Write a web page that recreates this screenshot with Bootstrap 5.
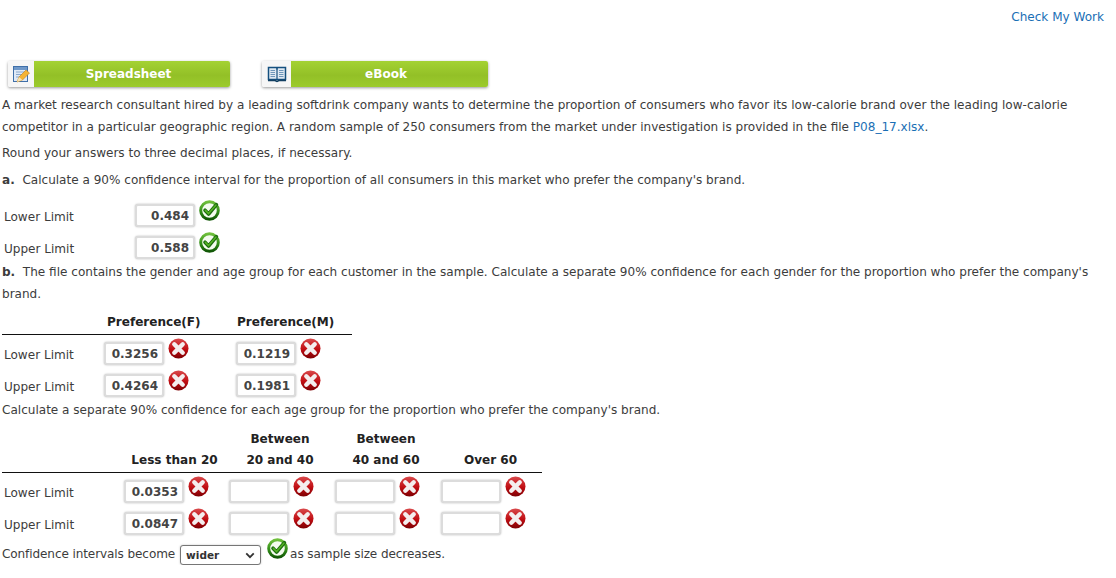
<!DOCTYPE html>
<html lang="en">
<head>
  <meta charset="UTF-8">
  <title>Check My Work</title>
  <link href="https://cdn.jsdelivr.net/npm/bootstrap@5.3.0/dist/css/bootstrap.min.css" rel="stylesheet">
  <style>
    body { font-family: "DejaVu Sans", Verdana, sans-serif; font-size: 12.06px; line-height: 22px; color: #3c3c3c; background: #fff; }
    a { color: #1a6fb5; text-decoration: none; }
    .page-wrap { padding: 6px 12px 0 2px; }
    .top-link { height: 22px; margin-bottom: 33px; }
    .tool-row { margin-left: 6px; margin-bottom: 7px; height: 26px; gap: 32px; }
    .tool-btn { height: 26px; display: flex; border-radius: 2px; box-shadow: 0 1px 3px rgba(0,0,0,.4); overflow: hidden; font-weight: 700; color: #fff; font-size: 12px; }
    .tool-ico { background: #f6f6f6; display: flex; align-items: center; justify-content: center; }
    .tool-lbl { background: linear-gradient(#a4d233, #93c027 55%, #9ccb2c); text-align: center; line-height: 26px; padding-right: 7px; }
    .btn-sheet { width: 222px; }
    .btn-sheet .tool-ico { width: 26px; }
    .btn-sheet .tool-lbl { width: 196px; }
    .btn-book { width: 226px; }
    .btn-book .tool-ico { width: 29px; }
    .btn-book .tool-lbl { width: 197px; }
    p { margin: 0; }
    .gap-4px { margin-bottom: 4px; }
    .gap-5px { margin-bottom: 5px; }
    .gap-9px { margin-bottom: 9px; }
    .gap-7px { margin-bottom: 7px; }
    .gap-8px { margin-bottom: 8px; }
    .ans-table { border-collapse: separate; border-spacing: 0; table-layout: fixed; }
    .ans-table th { font-weight: 700; color: #222; border-bottom: 1px solid #111; padding: 0 0 1px; vertical-align: bottom; line-height: 21px; }
    .ans-table td { padding: 0 0 5px; vertical-align: top; }
    .ans-table tr:last-child td { padding-bottom: 0; }
    .ans-table tbody tr:first-child td { padding-top: 3px; }
    .ans-table .row-lbl { padding-left: 2px; }
    .row-lbl span { display: block; margin: 6px 0 -1px; }
    .ans-cell { display: flex; align-items: flex-start; padding-left: 2px; }
    .ans-box { width: 60px; height: 23px; margin-top: 4px; padding: 0 4px 0 5px; border: 2px solid #dcdcdc; border-radius: 3px; box-shadow: 0 0 2px rgba(0,0,0,.3); font: 700 12px "DejaVu Sans", Verdana, sans-serif; color: #444; text-align: right; background: #fff; }
    .mark-ico { width: 21px; height: 21px; margin-left: 4px; flex: none; }
    .tbl-one { width: 260px; margin-bottom: 2px; }
    .tbl-two { width: 350px; margin-bottom: 2px; }
    .tbl-three { width: 540px; margin-bottom: 4px; }
    .pref-f { padding-left: 5px !important; }
    .pref-m { padding-left: 3px !important; }
    .head-mid { text-align: center; }
    .last-line span { margin-top: 4px; display: block; letter-spacing: -.1px; }
    .pick-box { width: 81px; height: 20px; margin: 6px 0 0 5px; padding: 0 20px 0 5px; font: 700 10.5px "DejaVu Sans", Verdana, sans-serif; color: #333; border: 1px solid #767676; border-radius: 3px; box-shadow: 0 0 2px rgba(0,0,0,.25); background-image: url("data:image/svg+xml,%3csvg xmlns='http://www.w3.org/2000/svg' viewBox='0 0 12 8'%3e%3cpath fill='none' stroke='%23333' stroke-width='2.2' d='M1.500 1.500 6 6l4.500-4.500'/%3e%3c/svg%3e"); background-size: 10px 7px; background-position: right 5px center; line-height: 18px; }
    .last-line .mark-ico { margin: -1px 2px 0 6px; }
  </style>
</head>
<body>
  <svg width="0" height="0" class="position-absolute">
    <defs>
      <linearGradient id="ringYes" x1="0" y1="0" x2="0" y2="1">
        <stop offset="0" stop-color="#6fbf3c"/><stop offset=".55" stop-color="#338f19"/><stop offset="1" stop-color="#115706"/>
      </linearGradient>
      <linearGradient id="gradNo" x1="0" y1="0" x2="0" y2="1">
        <stop offset="0" stop-color="#d94a4c"/><stop offset=".55" stop-color="#c00d12"/><stop offset="1" stop-color="#7d0003"/>
      </linearGradient>
      <symbol id="icoYes" viewBox="0 0 21 21">
        <circle cx="10.500" cy="10.500" r="8.800" fill="#f4fbef" stroke="url(#ringYes)" stroke-width="3"/>
        <path d="M6 10.200 9.600 14 17.400 4.600" fill="none" stroke="#1d6b10" stroke-width="3.600" stroke-linecap="round" stroke-linejoin="round"/>
        <path d="M6.400 10.400 9.600 13.600 17 5" fill="none" stroke="#55b324" stroke-width="1.500" stroke-linecap="round" stroke-linejoin="round"/>
      </symbol>
      <symbol id="icoNo" viewBox="0 0 21 21">
        <circle cx="10.500" cy="10.500" r="10" fill="url(#gradNo)"/>
        <path d="M6.300 6.300 14.700 14.700M14.700 6.300 6.300 14.700" stroke="#f4eeee" stroke-width="4.400" stroke-linecap="round"/>
      </symbol>
    </defs>
  </svg>

  <div class="page-wrap">
    <div class="top-link text-end"><a href="#">Check My Work</a></div>

    <div class="tool-row d-flex">
      <div class="tool-btn btn-sheet">
        <div class="tool-ico">
          <svg width="20" height="20" viewBox="0 0 20 20">
            <rect x="2.500" y="2.500" width="14" height="15" fill="#dfe9f6" stroke="#3f6fa8"/>
            <rect x="3" y="3" width="13" height="3" fill="#6f98c9"/>
            <path d="M5 8h9M5 10.500h6M5 13h4" stroke="#8aa8cc"/>
            <path d="M6 18 8 13 15 6 18.500 9 11.500 16Z" fill="#f5b335" stroke="#c27d14" stroke-width=".6"/>
            <path d="M6 18 8 13 11.500 16Z" fill="#f7e3b5"/>
          </svg>
        </div>
        <div class="tool-lbl">Spreadsheet</div>
      </div>
      <div class="tool-btn btn-book">
        <div class="tool-ico">
          <svg width="20" height="18" viewBox="0 0 20 18">
            <path d="M1.500 2.500H9.500L10 3.500 10.500 2.500H18.500V14.500H1.500Z" fill="#dfe9f2" stroke="#15507f" stroke-width="1.500"/>
            <path d="M10 3.500V14.500" stroke="#15507f" stroke-width="1.200"/>
            <path d="M3.500 5.500h4.500M3.500 7.500h4.500M3.500 9.500h4.500M3.500 11.500h4.500M12 5.500h4.500M12 7.500h4.500M12 9.500h4.500M12 11.500h4.500" stroke="#6f97ba"/>
            <path d="M1 15.500H8L10 16.500 12 15.500H19" fill="none" stroke="#123f62" stroke-width="1.500"/>
          </svg>
        </div>
        <div class="tool-lbl">eBook</div>
      </div>
    </div>

    <p class="gap-4px">A market research consultant hired by a leading softdrink company wants to determine the proportion of consumers who favor its low-calorie brand over the leading low-calorie competitor in a particular geographic region. A random sample of 250 consumers from the market under investigation is provided in the file <a href="#">P08_17.xlsx</a>.</p>
    <p class="gap-5px">Round your answers to three decimal places, if necessary.</p>
    <p class="gap-9px"><b>a.</b>&nbsp; Calculate a 90% confidence interval for the proportion of all consumers in this market who prefer the company's brand.</p>

    <table class="ans-table tbl-one">
      <colgroup><col style="width:131px"><col></colgroup>
      <tbody>
        <tr>
          <td class="row-lbl" style="padding-top:0"><span>Lower Limit</span></td>
          <td style="padding-top:0"><div class="ans-cell"><input class="ans-box" value="0.484"><svg class="mark-ico"><use href="#icoYes"/></svg></div></td>
        </tr>
        <tr>
          <td class="row-lbl"><span>Upper Limit</span></td>
          <td><div class="ans-cell"><input class="ans-box" value="0.588"><svg class="mark-ico"><use href="#icoYes"/></svg></div></td>
        </tr>
      </tbody>
    </table>

    <p class="gap-7px"><b>b.</b>&nbsp; The file contains the gender and age group for each customer in the sample. Calculate a separate 90% confidence for each gender for the proportion who prefer the company's brand.</p>

    <table class="ans-table tbl-two">
      <colgroup><col style="width:100px"><col style="width:132px"><col></colgroup>
      <thead>
        <tr><th></th><th class="pref-f">Preference(F)</th><th class="pref-m">Preference(M)</th></tr>
      </thead>
      <tbody>
        <tr>
          <td class="row-lbl"><span>Lower Limit</span></td>
          <td><div class="ans-cell"><input class="ans-box" value="0.3256"><svg class="mark-ico"><use href="#icoNo"/></svg></div></td>
          <td><div class="ans-cell"><input class="ans-box" value="0.1219"><svg class="mark-ico"><use href="#icoNo"/></svg></div></td>
        </tr>
        <tr>
          <td class="row-lbl"><span>Upper Limit</span></td>
          <td><div class="ans-cell"><input class="ans-box" value="0.4264"><svg class="mark-ico"><use href="#icoNo"/></svg></div></td>
          <td><div class="ans-cell"><input class="ans-box" value="0.1981"><svg class="mark-ico"><use href="#icoNo"/></svg></div></td>
        </tr>
      </tbody>
    </table>

    <p class="gap-8px">Calculate a separate 90% confidence for each age group for the proportion who prefer the company's brand.</p>

    <table class="ans-table tbl-three">
      <colgroup><col style="width:120px"><col style="width:105px"><col style="width:106px"><col style="width:106px"><col></colgroup>
      <thead>
        <tr>
          <th></th>
          <th class="head-mid">Less than 20</th>
          <th class="head-mid">Between<br>20 and 40</th>
          <th class="head-mid">Between<br>40 and 60</th>
          <th class="head-mid">Over 60</th>
        </tr>
      </thead>
      <tbody>
        <tr>
          <td class="row-lbl"><span>Lower Limit</span></td>
          <td><div class="ans-cell"><input class="ans-box" value="0.0353"><svg class="mark-ico"><use href="#icoNo"/></svg></div></td>
          <td><div class="ans-cell"><input class="ans-box"><svg class="mark-ico"><use href="#icoNo"/></svg></div></td>
          <td><div class="ans-cell"><input class="ans-box"><svg class="mark-ico"><use href="#icoNo"/></svg></div></td>
          <td><div class="ans-cell"><input class="ans-box"><svg class="mark-ico"><use href="#icoNo"/></svg></div></td>
        </tr>
        <tr>
          <td class="row-lbl"><span>Upper Limit</span></td>
          <td><div class="ans-cell"><input class="ans-box" value="0.0847"><svg class="mark-ico"><use href="#icoNo"/></svg></div></td>
          <td><div class="ans-cell"><input class="ans-box"><svg class="mark-ico"><use href="#icoNo"/></svg></div></td>
          <td><div class="ans-cell"><input class="ans-box"><svg class="mark-ico"><use href="#icoNo"/></svg></div></td>
          <td><div class="ans-cell"><input class="ans-box"><svg class="mark-ico"><use href="#icoNo"/></svg></div></td>
        </tr>
      </tbody>
    </table>

    <div class="last-line d-flex align-items-start">
      <span>Confidence intervals become</span>
      <select class="form-select pick-box"><option>wider</option><option>narrower</option></select>
      <svg class="mark-ico"><use href="#icoYes"/></svg>
      <span>as sample size decreases.</span>
    </div>
  </div>
  <script src="https://cdn.jsdelivr.net/npm/bootstrap@5.3.0/dist/js/bootstrap.bundle.min.js"></script>
</body>
</html>
